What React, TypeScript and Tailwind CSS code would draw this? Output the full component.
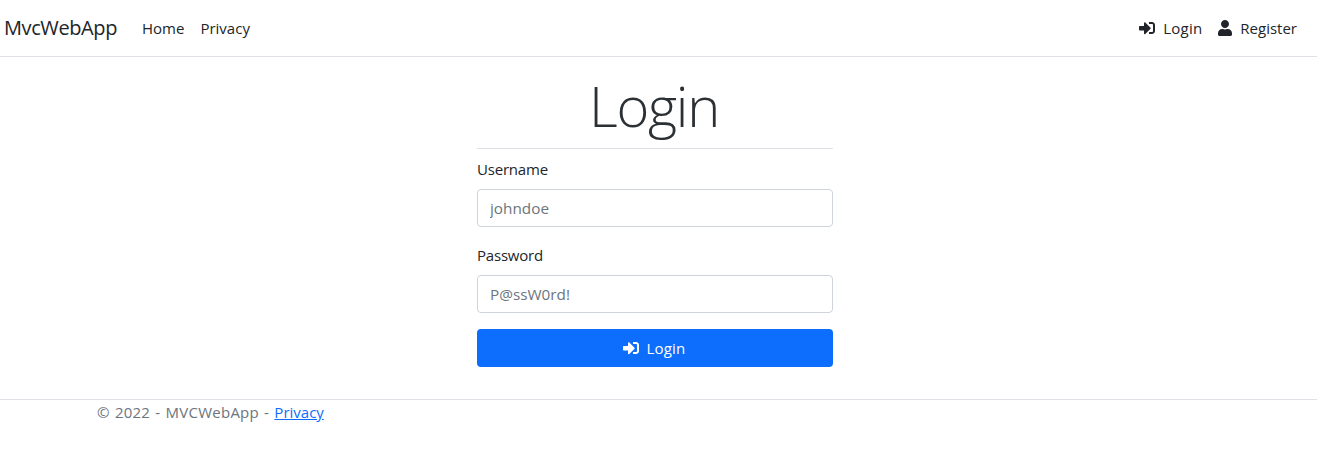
import { FaSignInAlt, FaUser } from "react-icons/fa";

export default function App() {
  return (
    <div className="min-h-[453px] bg-white text-[#212529] font-['Open_Sans','Noto_Sans',sans-serif] text-[15px]">
      {/* Navbar */}
      <nav className="h-[57px] flex items-center justify-between border-b border-[#dee2e6] pl-1 pr-5">
        <div className="flex items-center">
          <a href="#" className="text-[20px] tracking-[-0.4px] mr-[25px]">MvcWebApp</a>
          <a href="#" className="mr-4">Home</a>
          <a href="#">Privacy</a>
        </div>
        <div className="flex items-center">
          <a href="#" className="flex items-center mr-4 tracking-[0.2px]">
            <FaSignInAlt className="w-4 h-4 mr-2" />
            Login
          </a>
          <a href="#" className="flex items-center">
            <FaUser className="w-[14px] h-4 mr-2" />
            Register
          </a>
        </div>
      </nav>

      {/* Login form */}
      <main className="w-[356px] ml-[477px]">
        <h1 className="h-[92px] pt-[5px] pr-[2px] flex items-center justify-center border-b border-[#dee2e6] text-[56px] text-[#2b3035] font-light tracking-[-1.3px] leading-none">
          Login
        </h1>
        <label className="block mt-[9px] mb-[9px] h-[22px] leading-[22px] tracking-[-0.2px]">Username</label>
        <input
          placeholder="johndoe"
          className="block w-full h-[38px] px-3 border border-[#ced4da] rounded-[4px] text-[15.3px] placeholder:text-[#6c757d] outline-none"
        />
        <label className="block mt-[17px] mb-[9px] h-[22px] leading-[22px] tracking-[-0.2px]">Password</label>
        <input
          placeholder="P@ssW0rd!"
          className="block w-full h-[38px] px-3 border border-[#ced4da] rounded-[4px] text-[15.3px] placeholder:text-[#6c757d] outline-none"
        />
        <button className="mt-4 w-full h-[38px] pr-[2px] flex items-center justify-center bg-[#0d6efd] text-white rounded-[4px] tracking-[0.2px]">
          <FaSignInAlt className="w-4 h-4 mr-2" />
          Login
        </button>
      </main>

      {/* Footer */}
      <footer className="mt-8 border-t border-[#dee2e6] pl-[97px] leading-[24px] text-[#6c757d] tracking-[0.25px] [word-spacing:1px]">
        © 2022 - MVCWebApp - <a href="#" className="text-[#0d6efd] underline tracking-normal">Privacy</a>
      </footer>
    </div>
  );
}
